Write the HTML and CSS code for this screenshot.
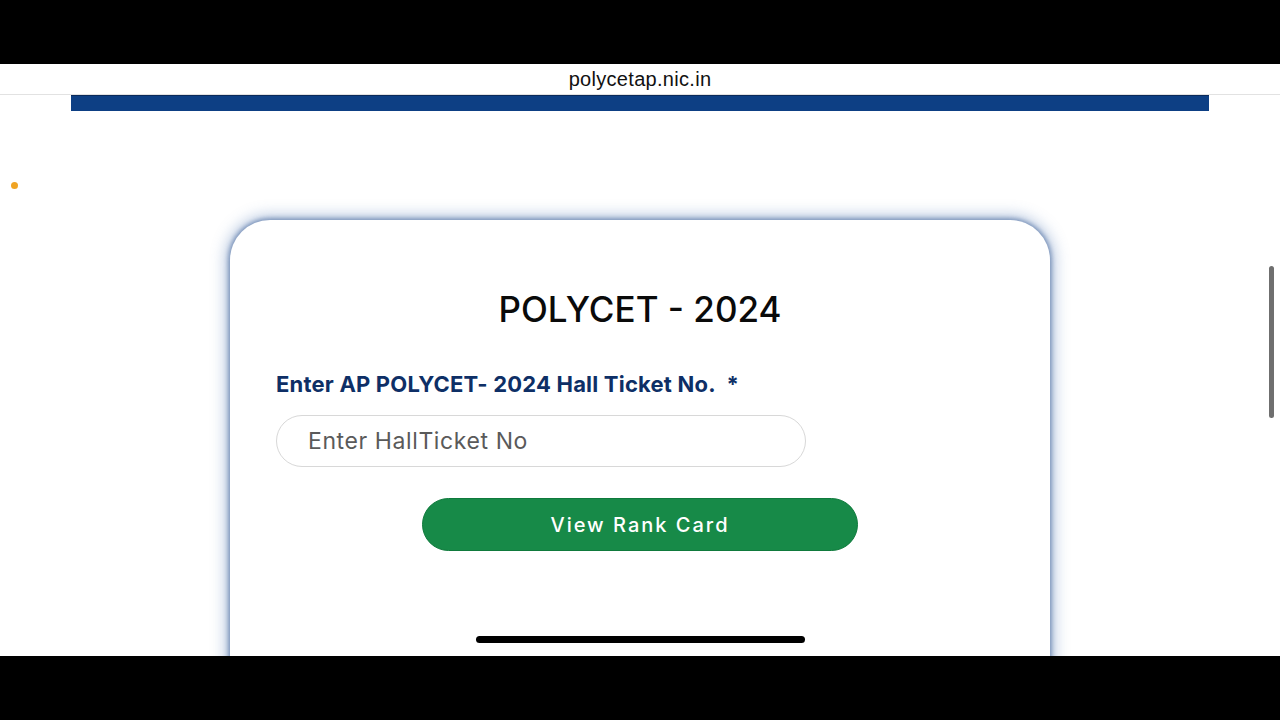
FILE: index.html
```html
<!DOCTYPE html>
<html lang="en">
<head>
  <meta charset="UTF-8" />
  <meta name="viewport" content="width=device-width, initial-scale=1.0"/>
  <title>POLYCET - 2024</title>
  <link rel="stylesheet" href="styles.css">
</head>
<body>

  <div class="letterbox"></div>

  <div class="screen">
    <div class="urlbar">polycetap.nic.in</div>

    <div class="page">
      <div class="topband"></div>

      <div class="dot-row">
        <span class="dot"></span>
      </div>

      <div class="card">
        <h2>POLYCET - 2024</h2>

        <label class="field-label" for="htno">Enter AP POLYCET- 2024 Hall Ticket No. <span class="req">*</span></label>
        <input type="text" id="htno" placeholder="Enter HallTicket No" />

        <div class="actions">
          <button>View Rank Card</button>
        </div>
      </div>
    </div>

    <div class="scrollbar"></div>
    <div class="home-indicator"></div>
  </div>

  <div class="letterbox"></div>

</body>
</html>
```

FILE: styles.css
```css
body {
  margin: 0;
  background: #000;
  font-family: Inter, 'Noto Sans', sans-serif;
  color: #111;
  height: 720px;
  overflow: hidden;
}

.letterbox {
  height: 64px;
  background: #000;
}

.screen {
  position: relative;
  height: 592px;
  background: #fff;
  overflow: hidden;
}

.urlbar {
  height: 30px;
  line-height: 30px;
  text-align: center;
  font-family: 'Liberation Sans', Arial, sans-serif;
  font-size: 20px;
  letter-spacing: 0.3px;
  color: #111;
  border-bottom: 1px solid #e2e2e2;
}

.page {
  padding: 0 71px;
}

.topband {
  height: 16px;
  background: #0d3f84;
  border-top: 1px solid #0a2a5a;
  box-sizing: border-box;
}

.dot-row {
  height: 109px;
  margin-left: -71px;
  position: relative;
}

.dot {
  position: absolute;
  left: 11px;
  top: 71px;
  width: 7px;
  height: 7px;
  border-radius: 50%;
  background: #f0a424;
}

.card {
  width: 820px;
  margin: 0 auto;
  height: 520px;
  box-sizing: border-box;
  background: #fff;
  border-radius: 40px;
  box-shadow: 0 0 4px 2px rgba(60, 95, 150, 0.55), 0 0 14px 6px rgba(80, 120, 180, 0.35);
  padding: 66px 46px 0;
}

.card h2 {
  margin: 0 0 38px;
  text-align: center;
  font-size: 35px;
  font-weight: 500;
  color: #0a0a0a;
  line-height: 46px;
}

.field-label {
  display: block;
  font-size: 22px;
  font-weight: 700;
  letter-spacing: 0.2px;
  color: #0e2f66;
  margin-bottom: 17px;
  line-height: 28px;
}

.req {
  margin-left: 6px;
}

.card input {
  display: block;
  width: 530px;
  height: 52px;
  box-sizing: border-box;
  border: 1px solid #d8d8d8;
  border-radius: 26px;
  padding: 0 31px;
  font-family: inherit;
  font-size: 23px;
  letter-spacing: 0.6px;
  color: #333;
  outline: none;
}

.card input::placeholder {
  color: #5a5a5a;
}

.actions {
  display: flex;
  justify-content: center;
  margin-top: 31px;
}

.actions button {
  width: 436px;
  height: 53px;
  border: 1px solid #0f7a3c;
  border-radius: 27px;
  background: #178a48;
  color: #fff;
  font-family: inherit;
  font-size: 20px;
  font-weight: 500;
  letter-spacing: 2px;
  cursor: pointer;
}

.scrollbar {
  position: absolute;
  right: 6px;
  top: 202px;
  width: 5px;
  height: 152px;
  border-radius: 3px;
  background: #6f6f6f;
}

.home-indicator {
  position: absolute;
  left: 476px;
  top: 572px;
  width: 329px;
  height: 7px;
  border-radius: 4px;
  background: #000;
}
```
